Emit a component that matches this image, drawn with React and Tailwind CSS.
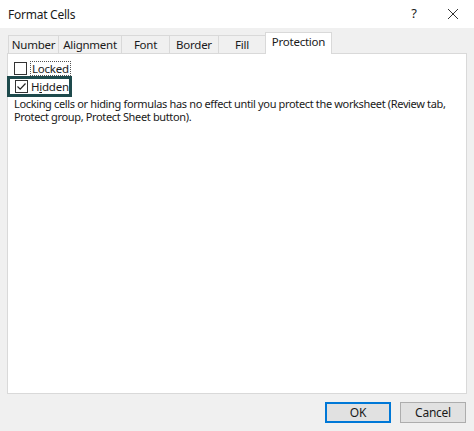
const tabs = [
  { label: "Number", w: "w-[50px]" },
  { label: "Alignment", w: "w-[63px]" },
  { label: "Font", w: "w-[48px]" },
  { label: "Border", w: "w-[49px]" },
  { label: "Fill", w: "w-[47px]" },
];

function Check({ checked }) {
  return (
    <span className="w-[13px] h-[13px] border border-[#333] bg-white flex items-center justify-center shrink-0">
      {checked && (
        <svg width="11" height="11" viewBox="0 0 11 11">
          <path d="M1.5 5.5 L4.2 8.2 L9.5 2.5" fill="none" stroke="#222" strokeWidth="1.2" />
        </svg>
      )}
    </span>
  );
}

export default function App() {
  return (
    <div
      className="w-[474px] h-[431px] bg-[#f0f0f0] flex flex-col text-[11.5px] tracking-[-0.25px] text-[#1a1a1a]"
      style={{ fontFamily: '"Noto Sans", "Open Sans", sans-serif' }}
    >
      <div className="h-[28px] bg-white flex items-center pl-[8px] shrink-0">
        <span className="flex-1 text-[12px] pt-[1px]">Format Cells</span>
        <span className="w-[14px] text-center text-[13px] mr-[26px]">?</span>
        <svg width="12" height="12" viewBox="0 0 12 12" className="mr-[15px]">
          <path d="M1 1 L11 11 M11 1 L1 11" stroke="#333" strokeWidth="1" />
        </svg>
      </div>

      <div className="flex items-end pl-[8px] mt-[4px] h-[21px] shrink-0 relative z-10">
        {tabs.map((t) => (
          <div
            key={t.label}
            className={`${t.w} h-[18px] border-t border-l border-[#d9d9d9] bg-[#f0f0f0] flex items-center justify-center leading-none`}
          >
            {t.label}
          </div>
        ))}
        <div className="w-[67px] h-[22px] border-t border-x border-[#d9d9d9] bg-white flex items-start justify-center pt-[3px] leading-none mb-[-1px]">
          Protection
        </div>
      </div>

      <div className="mx-[7px] h-[341px] bg-white border border-[#d9d9d9] shrink-0 px-[6px] pt-[7px]">
        <div className="flex items-center gap-[3px] h-[15px]">
          <Check />
          <span className="border border-dotted border-[#555] px-[1px] leading-[13px]">Locked</span>
        </div>
        <div className="ml-[-7px] w-[65px] h-[21px] border-[3px] border-[#1e4a4c] flex items-center gap-[3px] pl-[5px] whitespace-nowrap">
          <Check checked />
          <span className="leading-none">
            H<span className="underline">i</span>dden
          </span>
        </div>
        <p className="leading-[13px] text-[11px] tracking-[-0.35px] whitespace-nowrap">
          Locking cells or hiding formulas has no effect until you protect the worksheet (Review tab,
          <br />
          Protect group, Protect Sheet button).
        </p>
      </div>

      <div className="flex justify-end gap-[9px] pr-[8px] mt-[8px]">
        <button className="w-[66px] h-[21px] bg-[#e1e1e1] border-2 border-[#0078d7] leading-none text-[12px]">
          OK
        </button>
        <button className="w-[66px] h-[21px] bg-[#e1e1e1] border border-[#adadad] leading-none text-[12px]">
          Cancel
        </button>
      </div>
    </div>
  );
}
